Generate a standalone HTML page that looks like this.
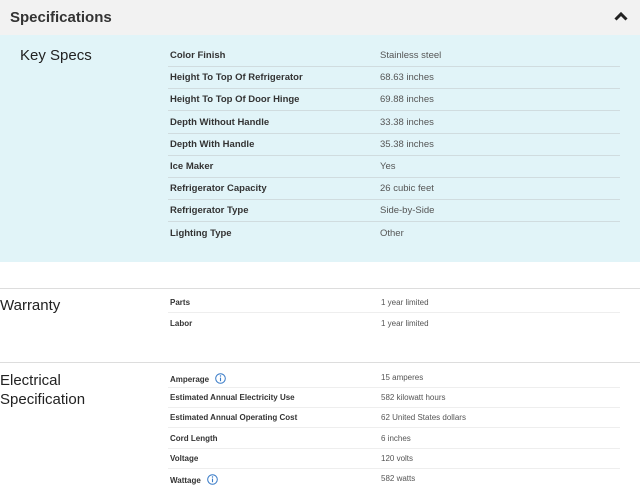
<!DOCTYPE html><html><head><style>
body{margin:0;width:640px;height:491px;overflow:hidden;background:#fff;font-family:"Liberation Sans",Arial,sans-serif;position:relative}
.a{position:absolute}
.hdr{left:0;top:0;width:640px;height:35px;background:#f2f2f2}
.hdr span{position:absolute;left:10px;top:9px;font-size:15px;font-weight:bold;color:#333}
.blue{left:0;top:35px;width:640px;height:227px;background:#e1f4f8}
.lbl{font-weight:bold;color:#333}
.val{color:#555}
.line{height:1px;background:#d0dcdf}
.sec{font-size:15px;color:#222}
</style></head><body>
<div class="a hdr"><span>Specifications</span>
<svg class="a" style="left:613px;top:11px" width="16" height="11" viewBox="0 0 16 11"><path d="M2.5 8.5 L8 3 L13.5 8.5" stroke="#222" stroke-width="3" fill="none"/></svg></div>
<div class="a blue"></div>
<div class="a" style="left:20px;top:47px;font-size:15px;color:#222">Key Specs</div>
<div id="k"></div>
<div class="a" style="left:0;top:288px;width:640px;height:1px;background:#ddd"></div>
<div class="a sec" style="left:0;top:297px">Warranty</div>
<div class="a" style="left:0;top:362px;width:640px;height:1px;background:#ddd"></div>
<div class="a sec" style="left:0;top:371px;line-height:19px">Electrical<br>Specification</div>
<script>
var k=[["Color Finish","Stainless steel"],["Height To Top Of Refrigerator","68.63 inches"],["Height To Top Of Door Hinge","69.88 inches"],["Depth Without Handle","33.38 inches"],["Depth With Handle","35.38 inches"],["Ice Maker","Yes"],["Refrigerator Capacity","26 cubic feet"],["Refrigerator Type","Side-by-Side"],["Lighting Type","Other"]];
var h="";
k.forEach(function(r,i){var y=50+i*22.2;h+='<div class="a lbl" style="left:170px;top:'+y+'px;font-size:9.5px">'+r[0]+'</div><div class="a val" style="left:380px;top:'+y+'px;font-size:9.5px">'+r[1]+'</div>';if(i<8)h+='<div class="a line" style="left:168px;width:452px;top:'+(y+16)+'px"></div>';});
var info='<svg style="vertical-align:-2px;margin-left:6px" width="11" height="11" viewBox="0 0 11 11"><circle cx="5.5" cy="5.5" r="4.8" fill="none" stroke="#3a7cc8"/><path d="M5.5 4.6v3.6" stroke="#3a7cc8" stroke-width="1.1"/><circle cx="5.5" cy="3" r=".7" fill="#3a7cc8"/></svg>';
var w=[["Parts","1 year limited"],["Labor","1 year limited"]];
w.forEach(function(r,i){var y=298+i*20.5;h+='<div class="a lbl" style="left:170px;top:'+y+'px;font-size:8px">'+r[0]+'</div><div class="a val" style="left:381px;top:'+y+'px;font-size:8px">'+r[1]+'</div>';if(i<1)h+='<div class="a line" style="left:168px;width:452px;top:'+(y+14)+'px;background:#eee"></div>';});
var e=[["Amperage"+info,"15 amperes"],["Estimated Annual Electricity Use","582 kilowatt hours"],["Estimated Annual Operating Cost","62 United States dollars"],["Cord Length","6 inches"],["Voltage","120 volts"],["Wattage"+info,"582 watts"]];
e.forEach(function(r,i){var y=373+i*20.2;h+='<div class="a lbl" style="left:170px;top:'+y+'px;font-size:8px">'+r[0]+'</div><div class="a val" style="left:381px;top:'+y+'px;font-size:8px">'+r[1]+'</div>';if(i<5)h+='<div class="a line" style="left:168px;width:452px;top:'+(y+14)+'px;background:#eee"></div>';});
document.getElementById("k").innerHTML=h;
</script>
</body></html>
